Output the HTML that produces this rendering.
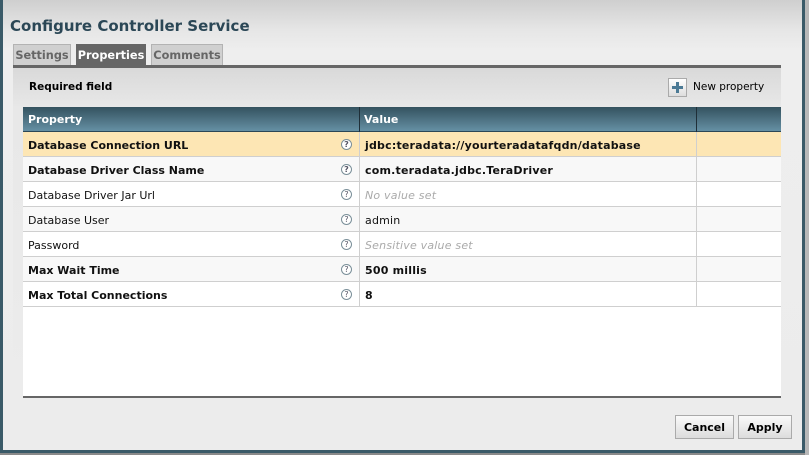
<!DOCTYPE html>
<html><head><meta charset="utf-8"><style>
*{margin:0;padding:0;box-sizing:border-box}
body{width:809px;height:455px;overflow:hidden;background:#8a8a8a;font-family:"DejaVu Sans","Liberation Sans",sans-serif;position:relative}
.dlg{position:absolute;left:0;top:0;width:805px;height:453px;border:3px solid #3a5a68;border-top:none;background:linear-gradient(#cfcfcf 0,#e6e6e6 30px,#eeeeee 50px,#ececec 100%)}
.side{position:absolute;left:805px;top:0;width:4px;height:455px;background:#b8b8b8}
.title{position:absolute;left:10px;top:17px;font-size:15px;font-weight:bold;color:#2b4756}
.tab{position:absolute;top:44px;height:21px;background:#d0d0d0;border:1px solid #b3b3b3;border-bottom:none;font-size:11.3px;font-weight:bold;color:#666;text-align:center;line-height:21px}
.tab.on{background:#666;color:#fff;border-color:#666;height:23px}
.line{position:absolute;left:13px;top:65px;width:768px;height:3px;background:#666}
.panel{position:absolute;left:13px;top:68px;width:768px;height:330px;background:linear-gradient(#d9d9d9,#e8e8e8 40px,#ececec)}
.req{position:absolute;left:29px;top:81px;font-size:10.5px;font-weight:bold;color:#000}
.np{position:absolute;left:693px;top:81px;font-size:10.5px;color:#000}
.plus{position:absolute;left:668px;top:78px;width:19px;height:19px;border:1px solid #aaa;background:linear-gradient(#fff,#ddd)}
.plus:before{content:"";position:absolute;left:3px;top:7px;width:11px;height:3px;background:#4b7a95}
.plus:after{content:"";position:absolute;left:7px;top:3px;width:3px;height:11px;background:#4b7a95}
.tbl{position:absolute;left:23px;top:107px;width:758px;height:291px;background:#fff;border-bottom:2px solid #666}
.hd{position:absolute;left:0;top:0;width:758px;height:25px;background:linear-gradient(#34525f,#6590a4);border-bottom:1px solid #2b4756}
.hd span{position:absolute;top:6px;font-size:11px;font-weight:bold;color:#fff}
.hd i{position:absolute;top:0;width:1px;height:25px;background:#1f2f38}
.row{position:absolute;left:0;width:758px;height:25px;border-bottom:1px solid #cfcfcf;font-size:11px;color:#111}
.row .c1{position:absolute;left:5px;top:7px}
.row .c2{position:absolute;left:342px;top:7px;letter-spacing:0.2px}
.row .q{position:absolute;left:318px;top:7px;width:11px;height:11px;border:1px solid #7a8f99;border-radius:50%;font-size:8px;line-height:9px;text-align:center;color:#556;background:#fff}
.row .d1{position:absolute;left:336px;top:0;width:1px;height:25px;background:#cfcfcf}
.row .d2{position:absolute;left:673px;top:0;width:1px;height:25px;background:#cfcfcf}
.b{font-weight:bold}
.g{color:#aaa;font-style:italic}
.btn{position:absolute;top:415px;height:24px;border:1px solid #aaa;background:linear-gradient(#fafafa,#dcdcdc);font-size:11px;font-weight:bold;text-align:center;line-height:23px;color:#000}
</style></head><body>
<div class="dlg"></div>
<div class="side"></div>
<div class="title">Configure Controller Service</div>
<div class="tab" style="left:13px;width:58px">Settings</div>
<div class="tab on" style="left:76px;width:70px">Properties</div>
<div class="tab" style="left:151px;width:72px">Comments</div>
<div class="line"></div>
<div class="panel"></div>
<div class="req">Required field</div>
<div class="plus"></div>
<div class="np">New property</div>
<div class="tbl">
<div class="hd"><span style="left:5px">Property</span><i style="left:336px"></i><span style="left:341px">Value</span><i style="left:673px"></i></div>
<div class="row b" style="top:25px;background:#fde6b4"><span class="c1">Database Connection URL</span><span class="q">?</span><i class="d1"></i><span class="c2" style="letter-spacing:0.2px">jdbc:teradata://yourteradatafqdn/database</span><i class="d2"></i></div>
<div class="row b" style="top:50px;background:#f8f8f8"><span class="c1">Database Driver Class Name</span><span class="q">?</span><i class="d1"></i><span class="c2">com.teradata.jdbc.TeraDriver</span><i class="d2"></i></div>
<div class="row" style="top:75px"><span class="c1">Database Driver Jar Url</span><span class="q">?</span><i class="d1"></i><span class="c2 g">No value set</span><i class="d2"></i></div>
<div class="row" style="top:100px;background:#f8f8f8"><span class="c1">Database User</span><span class="q">?</span><i class="d1"></i><span class="c2">admin</span><i class="d2"></i></div>
<div class="row" style="top:125px"><span class="c1">Password</span><span class="q">?</span><i class="d1"></i><span class="c2 g">Sensitive value set</span><i class="d2"></i></div>
<div class="row b" style="top:150px;background:#f8f8f8"><span class="c1">Max Wait Time</span><span class="q" style="font-weight:normal">?</span><i class="d1"></i><span class="c2">500 millis</span><i class="d2"></i></div>
<div class="row b" style="top:175px"><span class="c1">Max Total Connections</span><span class="q" style="font-weight:normal">?</span><i class="d1"></i><span class="c2">8</span><i class="d2"></i></div>
</div>
<div class="btn" style="left:675px;width:59px">Cancel</div>
<div class="btn" style="left:738px;width:54px">Apply</div>
</body></html>
